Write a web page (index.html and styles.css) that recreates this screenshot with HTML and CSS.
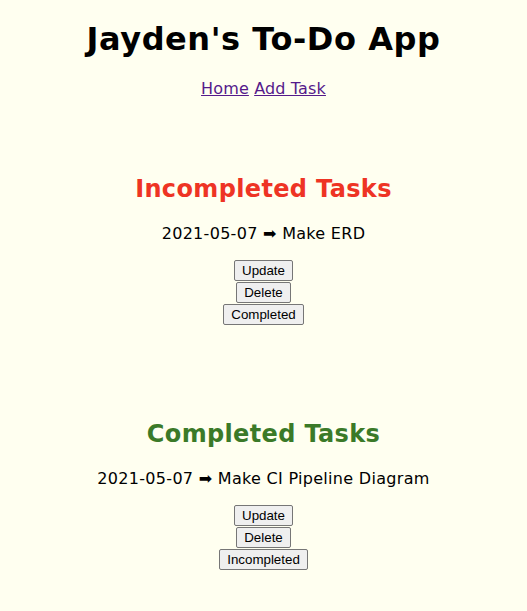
FILE: index.html
```html
<!DOCTYPE html>
<html>
<head>
<meta charset="utf-8">
<title>Jayden's To-Do App</title>
<link rel="stylesheet" href="styles.css">
</head>
<body>
<h1 class="title">Jayden's To-Do App</h1>
<nav class="nav"><a class="link" href="#">Home</a> <a class="link" href="#">Add Task</a></nav>
<section class="section">
  <h2 class="heading heading-red">Incompleted Tasks</h2>
  <div class="task">
    <p class="task-text">2021-05-07 ➡ Make ERD</p>
    <div class="actions">
      <button class="btn">Update</button>
      <button class="btn">Delete</button>
      <button class="btn">Completed</button>
    </div>
  </div>
</section>
<section class="section">
  <h2 class="heading heading-green">Completed Tasks</h2>
  <div class="task">
    <p class="task-text">2021-05-07 ➡ Make CI Pipeline Diagram</p>
    <div class="actions">
      <button class="btn">Update</button>
      <button class="btn">Delete</button>
      <button class="btn">Incompleted</button>
    </div>
  </div>
</section>
</body>
</html>
```
FILE: styles.css
```css
html, body {
  background: #fffff0;
}
body {
  margin: 8px;
  font-family: "DejaVu Sans", Verdana, sans-serif;
  color: #000;
  text-align: center;
}
.title {
  font-size: 32px;
  font-weight: bold;
  letter-spacing: 0.55px;
  margin: 12px 0 21px;
}
.nav {
  font-size: 16px;
  letter-spacing: 0.15px;
  margin: 16px 0;
}
.link {
  color: #551a8b;
}
.section {
  margin: 77px 0 0;
}
.section + .section {
  margin-top: 95px;
}
.heading {
  font-size: 24px;
  font-weight: bold;
  letter-spacing: 0.35px;
  margin: 20px 0 21px;
}
.heading-red {
  color: #ee3424;
}
.heading-green {
  color: #3b7a28;
}
.task-text {
  font-size: 16px;
  letter-spacing: 0.3px;
  margin: 16px 0 17px;
}
.actions {
  display: flex;
  flex-direction: column;
  align-items: center;
  gap: 1px;
}
.btn {
  font-family: "Liberation Sans", Arial, sans-serif;
  font-size: 13.333px;
  color: #000;
  background: #efefef;
  border: 1px solid #767676;
  border-radius: 2px;
  padding: 2px 7px;
  line-height: normal;
}
```
